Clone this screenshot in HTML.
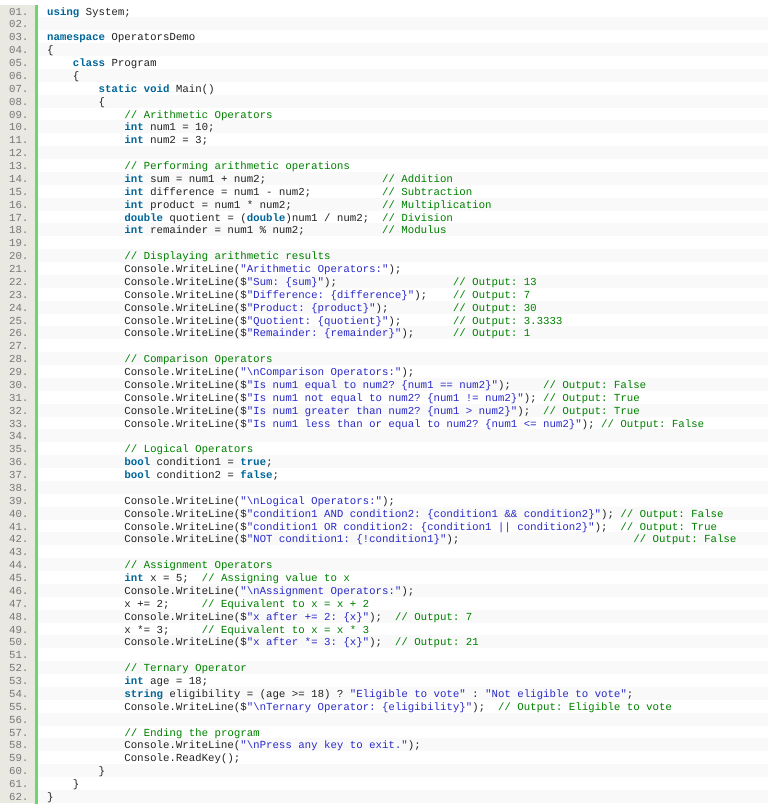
<!DOCTYPE html>
<html><head><meta charset="utf-8">
<style>
html,body{margin:0;padding:0;background:#fff;width:768px;height:805px;overflow:hidden}
#w{position:absolute;left:0;top:4.5px;width:768px;height:799px;font:10.742px/17.9px "Liberation Mono",monospace;text-rendering:geometricPrecision;filter:blur(.35px)}
#g{position:absolute;left:0;top:0;width:34px;background:#e9e9e2;color:#777}
#g div{height:12.885px;padding-left:9px;white-space:pre}
#b{position:absolute;left:34.5px;top:0;width:3px;height:799px;background:#6cd86c}
#g:after{content:"";position:absolute;left:34px;top:0;width:.5px;height:799px;background:#e9e9e2}
#c{position:absolute;left:37.5px;top:0;width:730.5px;color:#222}
#c div{height:12.885px;padding-left:9.5px;white-space:pre}
#c div:nth-child(even){background:#f9f9f9}
.k{color:#069;font-weight:bold}
.m{color:#008200}
.s{color:#2a2ac8}
</style></head><body>
<div id="w">
<div id="g"><div>01.</div><div>02.</div><div>03.</div><div>04.</div><div>05.</div><div>06.</div><div>07.</div><div>08.</div><div>09.</div><div>10.</div><div>11.</div><div>12.</div><div>13.</div><div>14.</div><div>15.</div><div>16.</div><div>17.</div><div>18.</div><div>19.</div><div>20.</div><div>21.</div><div>22.</div><div>23.</div><div>24.</div><div>25.</div><div>26.</div><div>27.</div><div>28.</div><div>29.</div><div>30.</div><div>31.</div><div>32.</div><div>33.</div><div>34.</div><div>35.</div><div>36.</div><div>37.</div><div>38.</div><div>39.</div><div>40.</div><div>41.</div><div>42.</div><div>43.</div><div>44.</div><div>45.</div><div>46.</div><div>47.</div><div>48.</div><div>49.</div><div>50.</div><div>51.</div><div>52.</div><div>53.</div><div>54.</div><div>55.</div><div>56.</div><div>57.</div><div>58.</div><div>59.</div><div>60.</div><div>61.</div><div>62.</div></div>
<div id="b"></div>
<div id="c">
<div><span class="k">using</span> System;</div>
<div></div>
<div><span class="k">namespace</span> OperatorsDemo</div>
<div>{</div>
<div>    <span class="k">class</span> Program</div>
<div>    {</div>
<div>        <span class="k">static</span> <span class="k">void</span> Main()</div>
<div>        {</div>
<div>            <span class="m">// Arithmetic Operators</span></div>
<div>            <span class="k">int</span> num1 = 10;</div>
<div>            <span class="k">int</span> num2 = 3;</div>
<div></div>
<div>            <span class="m">// Performing arithmetic operations</span></div>
<div>            <span class="k">int</span> sum = num1 + num2;                  <span class="m">// Addition</span></div>
<div>            <span class="k">int</span> difference = num1 - num2;           <span class="m">// Subtraction</span></div>
<div>            <span class="k">int</span> product = num1 * num2;              <span class="m">// Multiplication</span></div>
<div>            <span class="k">double</span> quotient = (<span class="k">double</span>)num1 / num2;  <span class="m">// Division</span></div>
<div>            <span class="k">int</span> remainder = num1 % num2;            <span class="m">// Modulus</span></div>
<div></div>
<div>            <span class="m">// Displaying arithmetic results</span></div>
<div>            Console.WriteLine(<span class="s">"Arithmetic Operators:"</span>);</div>
<div>            Console.WriteLine($<span class="s">"Sum: {sum}"</span>);                  <span class="m">// Output: 13</span></div>
<div>            Console.WriteLine($<span class="s">"Difference: {difference}"</span>);    <span class="m">// Output: 7</span></div>
<div>            Console.WriteLine($<span class="s">"Product: {product}"</span>);          <span class="m">// Output: 30</span></div>
<div>            Console.WriteLine($<span class="s">"Quotient: {quotient}"</span>);        <span class="m">// Output: 3.3333</span></div>
<div>            Console.WriteLine($<span class="s">"Remainder: {remainder}"</span>);      <span class="m">// Output: 1</span></div>
<div></div>
<div>            <span class="m">// Comparison Operators</span></div>
<div>            Console.WriteLine(<span class="s">"\nComparison Operators:"</span>);</div>
<div>            Console.WriteLine($<span class="s">"Is num1 equal to num2? {num1 == num2}"</span>);     <span class="m">// Output: False</span></div>
<div>            Console.WriteLine($<span class="s">"Is num1 not equal to num2? {num1 != num2}"</span>); <span class="m">// Output: True</span></div>
<div>            Console.WriteLine($<span class="s">"Is num1 greater than num2? {num1 &gt; num2}"</span>);  <span class="m">// Output: True</span></div>
<div>            Console.WriteLine($<span class="s">"Is num1 less than or equal to num2? {num1 &lt;= num2}"</span>); <span class="m">// Output: False</span></div>
<div></div>
<div>            <span class="m">// Logical Operators</span></div>
<div>            <span class="k">bool</span> condition1 = <span class="k">true</span>;</div>
<div>            <span class="k">bool</span> condition2 = <span class="k">false</span>;</div>
<div></div>
<div>            Console.WriteLine(<span class="s">"\nLogical Operators:"</span>);</div>
<div>            Console.WriteLine($<span class="s">"condition1 AND condition2: {condition1 &amp;&amp; condition2}"</span>); <span class="m">// Output: False</span></div>
<div>            Console.WriteLine($<span class="s">"condition1 OR condition2: {condition1 || condition2}"</span>);  <span class="m">// Output: True</span></div>
<div>            Console.WriteLine($<span class="s">"NOT condition1: {!condition1}"</span>);                           <span class="m">// Output: False</span></div>
<div></div>
<div>            <span class="m">// Assignment Operators</span></div>
<div>            <span class="k">int</span> x = 5;  <span class="m">// Assigning value to x</span></div>
<div>            Console.WriteLine(<span class="s">"\nAssignment Operators:"</span>);</div>
<div>            x += 2;     <span class="m">// Equivalent to x = x + 2</span></div>
<div>            Console.WriteLine($<span class="s">"x after += 2: {x}"</span>);  <span class="m">// Output: 7</span></div>
<div>            x *= 3;     <span class="m">// Equivalent to x = x * 3</span></div>
<div>            Console.WriteLine($<span class="s">"x after *= 3: {x}"</span>);  <span class="m">// Output: 21</span></div>
<div></div>
<div>            <span class="m">// Ternary Operator</span></div>
<div>            <span class="k">int</span> age = 18;</div>
<div>            <span class="k">string</span> eligibility = (age &gt;= 18) ? <span class="s">"Eligible to vote"</span> : <span class="s">"Not eligible to vote"</span>;</div>
<div>            Console.WriteLine($<span class="s">"\nTernary Operator: {eligibility}"</span>);  <span class="m">// Output: Eligible to vote</span></div>
<div></div>
<div>            <span class="m">// Ending the program</span></div>
<div>            Console.WriteLine(<span class="s">"\nPress any key to exit."</span>);</div>
<div>            Console.ReadKey();</div>
<div>        }</div>
<div>    }</div>
<div>}</div>
</div>
</div>
</body></html>
